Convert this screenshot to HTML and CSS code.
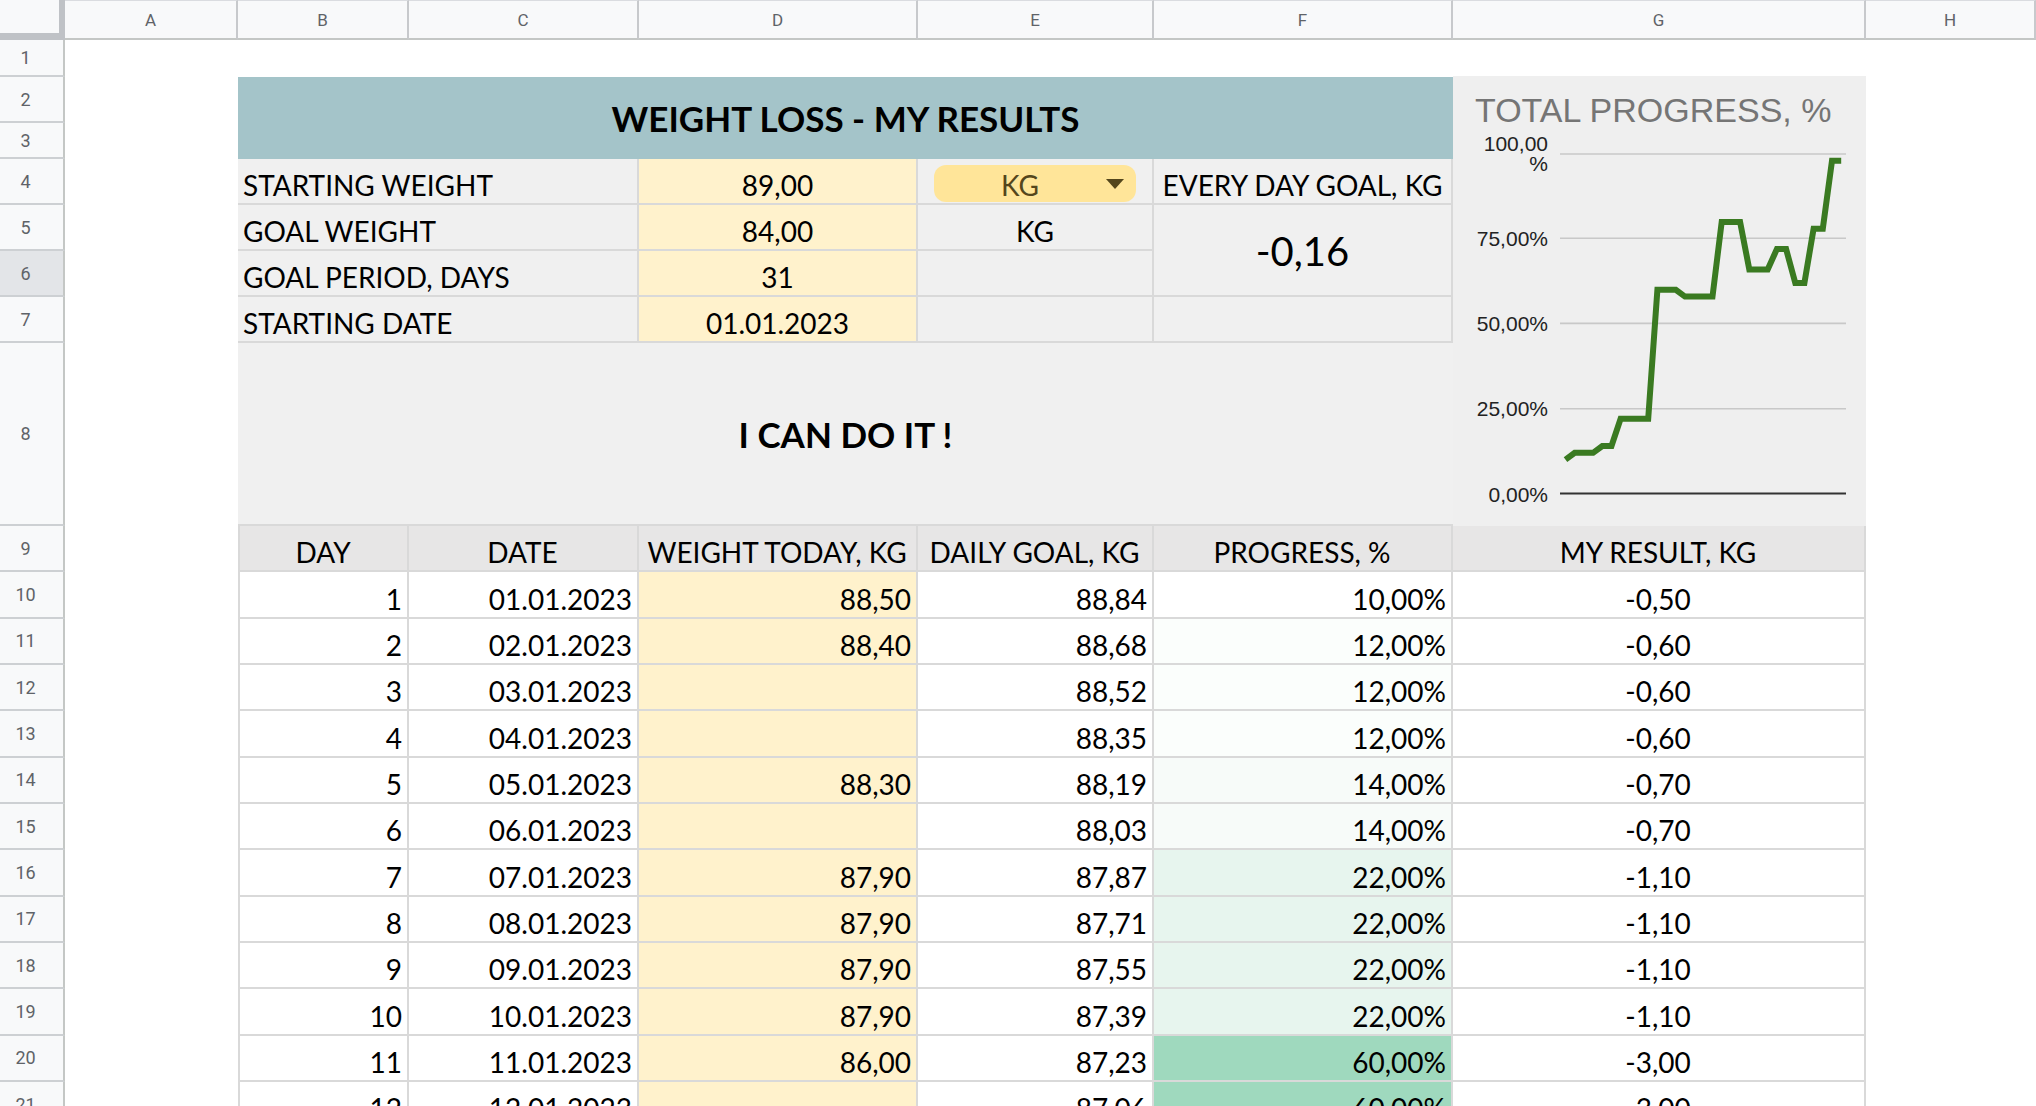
FILE: index.html
```html
<!DOCTYPE html>
<html lang="en">
<head>
<meta charset="utf-8">
<title>Weight loss - my results</title>
<link rel="stylesheet" href="styles.css">
</head>
<body>
<div class="sheet">
  <div class="cols">
    <div class="corner"></div>
    <div class="ch">A</div>
    <div class="ch">B</div>
    <div class="ch">C</div>
    <div class="ch">D</div>
    <div class="ch">E</div>
    <div class="ch">F</div>
    <div class="ch">G</div>
    <div class="ch">H</div>
  </div>

  <div class="top">
    <div class="rh">1</div>
    <div class="rh">2</div>
    <div class="rh">3</div>
    <div class="rh">4</div>
    <div class="rh">5</div>
    <div class="rh active">6</div>
    <div class="rh">7</div>
    <div class="rh">8</div>

    <div class="title">WEIGHT LOSS - MY RESULTS</div>

    <div class="lab r4">STARTING WEIGHT</div>
    <div class="val r4">89,00</div>
    <div class="ecell chipcell r4">
      <div class="chip">
        <span class="chip-text">KG</span>
        <svg class="chip-arrow" width="18" height="10" viewBox="0 0 18 10"><polygon points="0,0 18,0 9,10"/></svg>
      </div>
    </div>
    <div class="fcell r4">EVERY DAY GOAL, KG</div>

    <div class="lab r5">GOAL WEIGHT</div>
    <div class="val r5">84,00</div>
    <div class="ecell r5">KG</div>
    <div class="big">-0,16</div>

    <div class="lab r6">GOAL PERIOD, DAYS</div>
    <div class="val r6">31</div>
    <div class="ecell r6"></div>

    <div class="lab r7">STARTING DATE</div>
    <div class="val r7">01.01.2023</div>
    <div class="ecell r7"></div>
    <div class="fcell r7"></div>

    <div class="motto">I CAN DO IT !</div>

    <div class="chart">
      <svg class="chart-svg" width="413" height="449" viewBox="0 0 413 449">
        <text class="chart-title" x="22" y="46">TOTAL PROGRESS, %</text>
        <line class="grid" x1="107" y1="78" x2="393" y2="78"/>
        <line class="grid" x1="107" y1="162.3" x2="393" y2="162.3"/>
        <line class="grid" x1="107" y1="247.4" x2="393" y2="247.4"/>
        <line class="grid" x1="107" y1="332.8" x2="393" y2="332.8"/>
        <line class="axis" x1="107" y1="417.5" x2="393" y2="417.5"/>
        <text class="ylab" x="95" y="74.5">100,00</text>
        <text class="ylab" x="95" y="95">%</text>
        <text class="ylab" x="95" y="169.5">75,00%</text>
        <text class="ylab" x="95" y="254.5">50,00%</text>
        <text class="ylab" x="95" y="340">25,00%</text>
        <text class="ylab" x="95" y="425.5">0,00%</text>
        <polyline class="series" points="112.5,383.6 121.7,376.8 130.9,376.8 140.1,376.8 149.3,370 158.5,370 167.6,342.8 176.8,342.8 186,342.8 195.2,342.8 204.4,213.8 213.6,213.8 222.8,213.8 232,220.6 241.2,220.6 250.4,220.6 259.5,220.6 268.7,145.9 277.9,145.9 287.1,145.9 296.3,193.4 305.5,193.4 314.7,193.4 323.9,173.1 333.1,173.1 342.3,207 351.4,207 360.6,152.7 369.8,152.7 379,84.8 388.2,84.8"/>
      </svg>
    </div>
  </div>

  <div class="data">
    <div class="rh">9</div>
    <div class="d th first">DAY</div>
    <div class="d th">DATE</div>
    <div class="d th">WEIGHT TODAY, KG</div>
    <div class="d th">DAILY GOAL, KG</div>
    <div class="d th">PROGRESS, %</div>
    <div class="d th">MY RESULT, KG</div>

    <div class="rh">10</div>
    <div class="d first">1</div><div class="d">01.01.2023</div><div class="d yel">88,50</div><div class="d">88,84</div><div class="d p10">10,00%</div><div class="d ctr">-0,50</div>

    <div class="rh">11</div>
    <div class="d first">2</div><div class="d">02.01.2023</div><div class="d yel">88,40</div><div class="d">88,68</div><div class="d p12">12,00%</div><div class="d ctr">-0,60</div>

    <div class="rh">12</div>
    <div class="d first">3</div><div class="d">03.01.2023</div><div class="d yel"></div><div class="d">88,52</div><div class="d p12">12,00%</div><div class="d ctr">-0,60</div>

    <div class="rh">13</div>
    <div class="d first">4</div><div class="d">04.01.2023</div><div class="d yel"></div><div class="d">88,35</div><div class="d p12">12,00%</div><div class="d ctr">-0,60</div>

    <div class="rh">14</div>
    <div class="d first">5</div><div class="d">05.01.2023</div><div class="d yel">88,30</div><div class="d">88,19</div><div class="d p14">14,00%</div><div class="d ctr">-0,70</div>

    <div class="rh">15</div>
    <div class="d first">6</div><div class="d">06.01.2023</div><div class="d yel"></div><div class="d">88,03</div><div class="d p14">14,00%</div><div class="d ctr">-0,70</div>

    <div class="rh">16</div>
    <div class="d first">7</div><div class="d">07.01.2023</div><div class="d yel">87,90</div><div class="d">87,87</div><div class="d p22">22,00%</div><div class="d ctr">-1,10</div>

    <div class="rh">17</div>
    <div class="d first">8</div><div class="d">08.01.2023</div><div class="d yel">87,90</div><div class="d">87,71</div><div class="d p22">22,00%</div><div class="d ctr">-1,10</div>

    <div class="rh">18</div>
    <div class="d first">9</div><div class="d">09.01.2023</div><div class="d yel">87,90</div><div class="d">87,55</div><div class="d p22">22,00%</div><div class="d ctr">-1,10</div>

    <div class="rh">19</div>
    <div class="d first">10</div><div class="d">10.01.2023</div><div class="d yel">87,90</div><div class="d">87,39</div><div class="d p22">22,00%</div><div class="d ctr">-1,10</div>

    <div class="rh">20</div>
    <div class="d first">11</div><div class="d">11.01.2023</div><div class="d yel">86,00</div><div class="d">87,23</div><div class="d p60">60,00%</div><div class="d ctr">-3,00</div>

    <div class="rh">21</div>
    <div class="d first">12</div><div class="d">12.01.2023</div><div class="d yel"></div><div class="d">87,06</div><div class="d p60">60,00%</div><div class="d ctr">-3,00</div>
  </div>
</div>
</body>
</html>
```

FILE: styles.css
```css
* {
  box-sizing: border-box;
}

html, body {
  margin: 0;
  padding: 0;
  height: 100%;
  overflow: hidden;
  background: #ffffff;
}

.sheet {
  font-family: Lato, "Liberation Sans", sans-serif;
  font-size: 28px;
  color: #000000;
}

.cols,
.top,
.data {
  display: grid;
  grid-template-columns: 65px 173px 171px 230px 279px 236px 299px 413px 1fr;
}

/* ---------- column headers ---------- */
.cols {
  height: 40px;
}

.corner {
  background: #f8f9fa;
  border-right: 6px solid #bfc2c6;
  border-bottom: 7px solid #bfc2c6;
}

.ch {
  display: flex;
  align-items: center;
  justify-content: center;
  background: #f8f9fa;
  border-top: 1px solid #dadce0;
  border-right: 2px solid #c7c9cc;
  border-bottom: 2px solid #c4c7c5;
  font-family: Roboto, "Liberation Sans", sans-serif;
  font-size: 17px;
  color: #5f6368;
}

/* ---------- row headers ---------- */
.rh {
  grid-column: 1;
  display: flex;
  align-items: center;
  justify-content: center;
  padding-right: 12px;
  background: #f8f9fa;
  border-right: 2px solid #c4c7c5;
  border-bottom: 2px solid #cdd0d3;
  font-family: Roboto, "Liberation Sans", sans-serif;
  font-size: 18px;
  color: #5f6368;
}

.rh.active {
  background: #e3e5e8;
}

/* ---------- top block ---------- */
.top {
  grid-template-rows: 37px 46px 36px 46px 46px 46px 46px 183px;
}

.title {
  grid-column: 3 / 8;
  grid-row: 2 / 4;
  display: flex;
  align-items: center;
  justify-content: center;
  background: #a4c4c9;
  font-weight: 700;
  font-size: 35px;
}

.r4 { grid-row: 4; }
.r5 { grid-row: 5; }
.r6 { grid-row: 6; }
.r7 { grid-row: 7; }

.lab,
.val,
.ecell,
.fcell {
  display: flex;
  align-items: flex-end;
  line-height: 1;
  padding-bottom: 4px;
  border-bottom: 2px solid #d9d9d9;
  border-right: 2px solid #d9d9d9;
  background: #f0f0f0;
}

.lab {
  grid-column: 3 / 5;
  padding-left: 5px;
}

.val {
  grid-column: 5;
  justify-content: center;
  background: #fff2cc;
}

.ecell {
  grid-column: 6;
  justify-content: center;
}

.fcell {
  grid-column: 7;
  justify-content: center;
}

.chipcell {
  align-items: stretch;
  padding: 6px 16px 1px 16px;
}

.chip {
  flex: 1;
  display: flex;
  align-items: center;
  padding-right: 12px;
  border-radius: 12px;
  background: #ffe599;
  color: #54461c;
}

.chip-text {
  flex: 1;
  text-align: center;
  padding-top: 2px;
}

.chip-arrow {
  display: block;
  fill: #54461c;
}

.big {
  grid-column: 7;
  grid-row: 5 / 7;
  display: flex;
  align-items: center;
  justify-content: center;
  background: #f0f0f0;
  border-bottom: 2px solid #d9d9d9;
  border-right: 2px solid #d9d9d9;
  font-size: 40px;
  padding-top: 2px;
}

.motto {
  grid-column: 3 / 8;
  grid-row: 8;
  display: flex;
  align-items: center;
  justify-content: center;
  background: #f0f0f0;
  border-bottom: 2px solid #d9d9d9;
  font-weight: 700;
  font-size: 35px;
}

/* ---------- chart (floating object over column G) ---------- */
.chart {
  grid-column: 8;
  grid-row: 2 / 9;
  z-index: 1;
  background: #efefef;
  margin-top: -1px;
}

.chart-svg {
  display: block;
}

.chart-title {
  font-family: "Liberation Sans", Arial, sans-serif;
  font-size: 34px;
  fill: #757575;
}

.ylab {
  font-family: "Liberation Sans", Arial, sans-serif;
  font-size: 21px;
  fill: #222222;
  text-anchor: end;
}

.grid {
  stroke: #c8c8c8;
  stroke-width: 1.6;
}

.axis {
  stroke: #333333;
  stroke-width: 1.8;
}

.series {
  fill: none;
  stroke: #3a7a21;
  stroke-width: 6;
  stroke-linejoin: miter;
  stroke-linecap: butt;
}

/* ---------- data table ---------- */
.data {
  grid-auto-rows: 46.33px;
}

.d {
  display: flex;
  align-items: flex-end;
  justify-content: flex-end;
  line-height: 1;
  padding: 0 5px 4px 4px;
  background: #ffffff;
  border-right: 2px solid #d9d9d9;
  border-bottom: 2px solid #d9d9d9;
}

.d.first {
  grid-column: 3;
  border-left: 2px solid #d9d9d9;
}

.d.th {
  justify-content: center;
  background: #e7e6e6;
}

.d.ctr {
  justify-content: center;
}

.d.yel {
  background: #fff2cc;
}

.p12 { background: #fbfefc; }
.p14 { background: #f7fbf9; }
.p22 { background: #e7f5ee; }
.p60 { background: #9fd9be; }
```
